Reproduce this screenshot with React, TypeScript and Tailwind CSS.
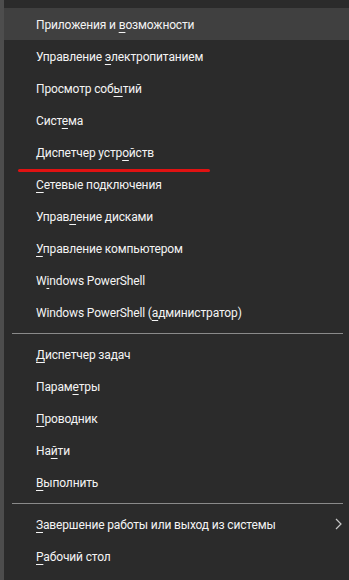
import React from 'react';

interface MenuItem {
  text: string;
  key: number; // index of the access-key letter
  active?: boolean;
  submenu?: boolean;
}

const groups: MenuItem[][] = [
  [
    { text: 'Приложения и возможности', key: 13, active: true },
    { text: 'Управление электропитанием', key: 11 },
    { text: 'Просмотр событий', key: 12 },
    { text: 'Система', key: 4 },
    { text: 'Диспетчер устройств', key: 14 },
    { text: 'Сетевые подключения', key: 0 },
    { text: 'Управление дисками', key: 5 },
    { text: 'Управление компьютером', key: 0 },
    { text: 'Windows PowerShell', key: 1 },
    { text: 'Windows PowerShell (администратор)', key: 20 },
  ],
  [
    { text: 'Диспетчер задач', key: 0 },
    { text: 'Параметры', key: 5 },
    { text: 'Проводник', key: 0 },
    { text: 'Найти', key: 2 },
    { text: 'Выполнить', key: 0 },
  ],
  [
    { text: 'Завершение работы или выход из системы', key: 0, submenu: true },
    { text: 'Рабочий стол', key: 0 },
  ],
];

const Row: React.FC<{ item: MenuItem }> = ({ item }) => {
  const { text, key } = item;
  return (
    <div
      className={`relative flex h-8 items-center pl-8 pr-3 ${item.active ? 'bg-[#404040]' : ''}`}
    >
      <span className="translate-y-[1px] whitespace-nowrap">
        {text.slice(0, key)}
        <span className="underline decoration-1 underline-offset-[3px]">{text[key]}</span>
        {text.slice(key + 1)}
      </span>
      {item.submenu && (
        <svg
          className="absolute right-[7px] top-1/2 -translate-y-1/2"
          width="7"
          height="12"
          viewBox="0 0 7 12"
          fill="none"
        >
          <path d="M1 1l5 5-5 5" stroke="#c8c8c8" strokeWidth="1.2" />
        </svg>
      )}
    </div>
  );
};

export default function App() {
  return (
    <div
      className="relative flex h-[580px] w-[349px] overflow-hidden bg-[#2b2b2b] text-[12px] tracking-[-0.15px] text-[#f4f4f4]"
      style={{ fontFamily: 'Roboto, "Noto Sans", sans-serif' }}
    >
      <div className="w-[4px] shrink-0 bg-[#4d4d4d]" />
      <div className="flex flex-1 flex-col pt-2">
        {groups.map((group, gi) => (
          <React.Fragment key={gi}>
            {gi > 0 && <div className="mt-[5px] mb-[4px] ml-2 mr-[6px] h-px bg-[#8a8a8a]" />}
            {group.map((item) => (
              <Row key={item.text} item={item} />
            ))}
          </React.Fragment>
        ))}
      </div>
      {/* red annotation line */}
      <div className="absolute left-[18px] top-[169px] h-[3px] w-[192px] rounded-full bg-[#e01212]" />
    </div>
  );
}
